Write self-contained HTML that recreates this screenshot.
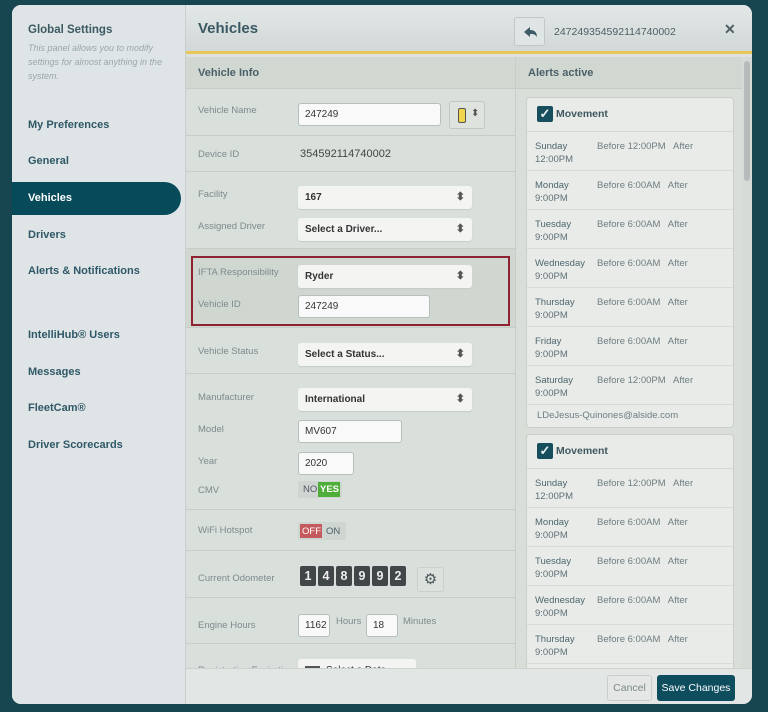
<!DOCTYPE html><html><head><style>
*{box-sizing:border-box;margin:0;padding:0}
body{width:768px;height:712px;background:#174550;font-family:"Liberation Sans",sans-serif;position:relative;overflow:hidden}
.panel{position:absolute;left:12px;top:5px;width:740px;height:699px;border-radius:9px;overflow:hidden;background:#dde2e0}
.side{position:absolute;left:0;top:0;width:174px;height:699px;background:#dfe5e7;border-right:1px solid #c9cfcf}
.side h3{position:absolute;left:16px;top:19px;font-size:11.5px;color:#3d5a62}
.side p{position:absolute;left:16px;top:36px;width:150px;font-size:9px;font-style:italic;color:#9aa6a8;line-height:14px}
.nav{position:absolute;left:16px;font-size:11px;font-weight:bold;color:#2f5866}
.act{position:absolute;left:0;top:177px;width:169px;height:33px;background:#074a5a;border-radius:0 17px 17px 0}
.hdr{position:absolute;left:174px;top:0;width:566px;height:49px;background:linear-gradient(#e2e7e8,#d2d8d8);border-bottom:3px solid #e8c756}
.hdr h2{position:absolute;left:12px;top:15px;font-size:15px;color:#3b5963}
.back{position:absolute;left:328px;top:12px;width:31px;height:29px;border:1px solid #c1c7c8;border-radius:3px;background:#dfe4e5}
.lt{position:absolute;left:174px;top:52px;width:329px;height:611px;background:#d9dfda}
.rt{position:absolute;left:503px;top:52px;width:227px;height:611px;background:#d9ded9;border-left:1px solid #c7cdc8}
.ch{position:absolute;left:0;top:0;right:0;height:32px;background:#d1d8d2;border-bottom:1px solid #c6ccc7;font-size:11px;font-weight:bold;color:#4a6068;padding:10px 12px}
.row{position:absolute;left:0;width:329px;border-bottom:1px solid #c6ccc7}
.lb{position:absolute;left:12px;font-size:9.5px;color:#7d8a8d}
.in{position:absolute;height:23px;background:#f8f9f8;border:1px solid #b8bebb;border-radius:3px;font-size:10px;color:#333;padding:5px 6px}
.sel{position:absolute;height:23px;background:#f4f5f3;border-radius:3px;font-size:10px;font-weight:bold;color:#333;padding:6px 7px;box-shadow:0 1px 1px #c5cbc6}
.arr:after{content:"⬍";position:absolute;right:7px;top:4px;font-size:11px;color:#555}
.sb{position:absolute;left:730px;top:52px;width:10px;height:611px;background:#d6dbd8}
.sb div{position:absolute;left:2px;top:4px;width:6px;height:120px;background:#b6bcbc;border-radius:3px}
.card{position:absolute;left:10px;width:208px;background:#e8ebe7;border:1px solid #c9cfca;border-radius:4px;overflow:hidden}
.cardh{height:34px;border-bottom:1px solid #d3d8d3;font-size:10.5px;font-weight:bold;color:#3f5860;padding:10px 0 0 29px;position:relative}
.cb{position:absolute;left:10px;top:8px;width:16px;height:16px;background:#164e5e;border-radius:2px;color:#e8f0f0;font-size:13px;line-height:16px;text-align:center;font-weight:bold}
.ar{height:39px;border-bottom:1px solid #d8dcd7;font-size:9.5px;color:#5f7078;position:relative;padding:8px 8px;line-height:13px}
.ar b{font-weight:normal;color:#4d6670}
.ar span{position:absolute;left:70px;top:8px;color:#6e7d82}
.foot{position:absolute;left:174px;top:663px;width:566px;height:36px;background:#e2e6e4;border-top:1px solid #cdd2cf}
.dg{display:inline-block;width:16px;height:20px;background:#414648;color:#eee;font-size:12.5px;font-weight:bold;text-align:center;line-height:20px;border-radius:2px;margin-right:2px}
</style></head><body>
<div class="panel">
<div class="side">
<h3>Global Settings</h3>
<p>This panel allows you to modify settings for almost anything in the system.</p>
<div class="nav" style="top:114px">My Preferences</div>
<div class="nav" style="top:150px">General</div>
<div class="act"></div>
<div class="nav" style="top:187px;color:#fff">Vehicles</div>
<div class="nav" style="top:224px">Drivers</div>
<div class="nav" style="top:260px">Alerts &amp; Notifications</div>
<div class="nav" style="top:324px">IntelliHub® Users</div>
<div class="nav" style="top:361px">Messages</div>
<div class="nav" style="top:397px">FleetCam®</div>
<div class="nav" style="top:434px">Driver Scorecards</div>
</div>
<div class="hdr"><h2>Vehicles</h2>
<div class="back"><svg width="31" height="29" viewBox="0 0 31 29"><path d="M9 14 L15 9 L15 12 C20 12 22 15 22 19 C20 16 18 16 15 16 L15 19 Z" fill="#3d5a66"/></svg></div>
<div style="position:absolute;left:368px;top:21px;font-size:10.5px;color:#4d5e64">247249354592114740002</div>
<div style="position:absolute;left:538px;top:16px;font-size:14px;font-weight:bold;color:#4d5e64">✕</div>
</div>
<div class="lt">
<div class="ch">Vehicle Info</div>
<div class="row" style="top:32px;height:47px"><div class="lb" style="top:16px">Vehicle Name</div><div class="in" style="left:112px;top:14px;width:143px">247249</div>
<div style="position:absolute;left:263px;top:12px;width:36px;height:28px;border:1px solid #c1c7c3;border-radius:3px;background:#dfe3de"><div style="position:absolute;left:8px;top:6px;width:8px;height:15px;background:#f0d44a;border:1px solid #555;border-radius:2px"></div><span style="position:absolute;left:21px;top:6px;font-size:10px;color:#555">⬍</span></div></div>
<div class="row" style="top:79px;height:36px"><div class="lb" style="top:13px">Device ID</div><div style="position:absolute;left:114px;top:12px;font-size:11px;color:#444">354592114740002</div></div>
<div class="row" style="top:115px;height:77px"><div class="lb" style="top:17px">Facility</div><div class="sel arr" style="left:112px;top:14px;width:174px">167</div>
<div class="lb" style="top:49px">Assigned Driver</div><div class="sel arr" style="left:112px;top:46px;width:174px">Select a Driver...</div></div>
<div class="row" style="top:192px;height:79px;background:#d0d7d1"><div style="position:absolute;left:5px;top:7px;width:319px;height:70px;border:2px solid #8e2230"></div>
<div class="lb" style="top:18px">IFTA Responsibility</div><div class="sel arr" style="left:112px;top:16px;width:174px">Ryder</div>
<div class="lb" style="top:50px">Vehicle ID</div><div class="in" style="left:112px;top:46px;width:132px">247249</div></div>
<div class="row" style="top:271px;height:46px"><div class="lb" style="top:18px">Vehicle Status</div><div class="sel arr" style="left:112px;top:15px;width:174px">Select a Status...</div></div>
<div class="row" style="top:317px;height:136px"><div class="lb" style="top:18px">Manufacturer</div><div class="sel arr" style="left:112px;top:14px;width:174px">International</div>
<div class="lb" style="top:50px">Model</div><div class="in" style="left:112px;top:46px;width:104px">MV607</div>
<div class="lb" style="top:82px">Year</div><div class="in" style="left:112px;top:78px;width:56px">2020</div>
<div class="lb" style="top:111px">CMV</div><div style="position:absolute;left:112px;top:107px;width:44px;height:17px;background:#cfd5d1;border-radius:2px;font-size:9.5px;color:#556"><span style="position:absolute;left:5px;top:3px">NO</span><span style="position:absolute;left:20px;top:1px;width:22px;height:15px;background:#4fae3a;color:#fff;font-weight:bold;padding:2px 2px">YES</span></div></div>
<div class="row" style="top:453px;height:41px"><div class="lb" style="top:15px">WiFi Hotspot</div><div style="position:absolute;left:112px;top:12px;width:48px;height:18px;background:#cfd5d1;border-radius:2px;font-size:9.5px"><span style="position:absolute;left:2px;top:2px;width:22px;height:14px;background:#c45a5e;color:#fff;padding:2px 2px">OFF</span><span style="position:absolute;left:28px;top:4px;color:#4a6068">ON</span></div></div>
<div class="row" style="top:494px;height:47px"><div class="lb" style="top:22px">Current Odometer</div><div style="position:absolute;left:114px;top:15px;white-space:nowrap"><span class="dg">1</span><span class="dg">4</span><span class="dg">8</span><span class="dg">9</span><span class="dg">9</span><span class="dg">2</span></div>
<div style="position:absolute;left:231px;top:16px;width:27px;height:25px;background:#dde1dd;border:1px solid #cbd0cc;border-radius:3px;color:#4a5558;font-size:15px;text-align:center;line-height:23px">⚙</div></div>
<div class="row" style="top:541px;height:46px"><div class="lb" style="top:22px">Engine Hours</div><div class="in" style="left:112px;top:16px;width:32px">1162</div><div class="lb" style="left:150px;top:18px">Hours</div><div class="in" style="left:180px;top:16px;width:32px">18</div><div class="lb" style="left:217px;top:18px">Minutes</div></div>
<div class="row" style="top:587px;height:30px;border:0"><div class="lb" style="top:21px">Registration Expiration</div><div class="sel" style="left:112px;top:15px;width:118px;padding-left:28px;font-weight:normal"><span style="position:absolute;left:7px;top:7px;width:15px;height:8px;border-top:2px solid #555;border-bottom:2px solid #555"></span>Select a Date</div></div>
</div>
<div class="rt">
<div class="ch">Alerts active</div>
<div class="card" style="top:40px">
<div class="cardh"><div class="cb">✓</div>Movement</div>
<div class="ar"><b>Sunday</b><span>Before 12:00PM &nbsp; After</span><br>12:00PM</div>
<div class="ar"><b>Monday</b><span>Before 6:00AM &nbsp; After</span><br>9:00PM</div>
<div class="ar"><b>Tuesday</b><span>Before 6:00AM &nbsp; After</span><br>9:00PM</div>
<div class="ar"><b>Wednesday</b><span>Before 6:00AM &nbsp; After</span><br>9:00PM</div>
<div class="ar"><b>Thursday</b><span>Before 6:00AM &nbsp; After</span><br>9:00PM</div>
<div class="ar"><b>Friday</b><span>Before 6:00AM &nbsp; After</span><br>9:00PM</div>
<div class="ar"><b>Saturday</b><span>Before 12:00PM &nbsp; After</span><br>9:00PM</div>
<div style="height:22px;font-size:9.5px;color:#6e7d82;padding:5px 10px">LDeJesus-Quinones@alside.com</div>
</div>
<div class="card" style="top:377px;height:245px">
<div class="cardh"><div class="cb">✓</div>Movement</div>
<div class="ar"><b>Sunday</b><span>Before 12:00PM &nbsp; After</span><br>12:00PM</div>
<div class="ar"><b>Monday</b><span>Before 6:00AM &nbsp; After</span><br>9:00PM</div>
<div class="ar"><b>Tuesday</b><span>Before 6:00AM &nbsp; After</span><br>9:00PM</div>
<div class="ar"><b>Wednesday</b><span>Before 6:00AM &nbsp; After</span><br>9:00PM</div>
<div class="ar"><b>Thursday</b><span>Before 6:00AM &nbsp; After</span><br>9:00PM</div>
</div>
</div>
<div class="sb"><div></div></div>
<div class="foot">
<div style="position:absolute;left:421px;top:6px;width:45px;height:26px;border:1px solid #c8cdca;border-radius:3px;background:#e4e7e5;font-size:10.5px;color:#7d8a8d;text-align:center;line-height:24px">Cancel</div>
<div style="position:absolute;left:471px;top:6px;width:78px;height:26px;border-radius:3px;background:#0d4d5d;font-size:10.5px;color:#fff;text-align:center;line-height:26px">Save Changes</div>
</div>
</div>
</body></html>
